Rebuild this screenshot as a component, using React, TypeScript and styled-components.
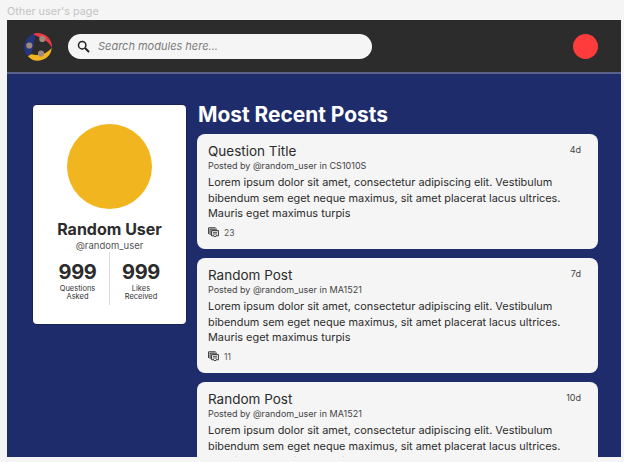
import React from 'react';
import styled, { createGlobalStyle } from 'styled-components';

const GlobalStyle = createGlobalStyle`
    html, body {
        margin: 0;
        padding: 0;
        background: #f5f5f5;
        overflow: hidden;
    }
    * {
        box-sizing: border-box;
    }
    body {
        font-family: Inter, "Noto Sans", sans-serif;
    }
`;

const Page = styled.div`
    width: 624px;
    height: 462px;
    overflow: hidden;
    padding: 5px 3px 0 7px;
`;

const FrameLabel = styled.div`
    height: 15px;
    font-size: 10.8px;
    line-height: 14px;
    color: #c4c4c4;
`;

const Frame = styled.div`
    width: 614px;
    height: 437px;
    background: #1e2c6b;
    overflow: hidden;
`;

const Header = styled.header`
    height: 54px;
    background: #2c2c2c;
    border-bottom: 2px solid #5a628a;
    display: flex;
    align-items: center;
    padding: 0 23px 0 16px;
`;

const Logo = styled.svg`
    width: 30px;
    height: 30px;
    flex: none;
`;

const SearchBar = styled.div`
    width: 304px;
    height: 25px;
    margin-left: 15px;
    border-radius: 13px;
    background: #f5f5f5;
    display: flex;
    align-items: center;
    padding-left: 9px;
    gap: 8px;
`;

const SearchText = styled.span`
    font-size: 11px;
    font-style: italic;
    color: #7b7b7b;
`;

const Avatar = styled.div`
    width: 25px;
    height: 25px;
    margin-left: auto;
    border-radius: 50%;
    background: #ff3b3b;
`;

const Body = styled.main`
    display: flex;
    align-items: flex-start;
    padding: 31px 23px 0 26px;
    gap: 11px;
`;

const ProfileCard = styled.aside`
    width: 153px;
    height: 219px;
    flex: none;
    background: #fff;
    border-radius: 4px;
    box-shadow: 0 0 0 0.5px #10183f;
    display: flex;
    flex-direction: column;
    align-items: center;
    padding-top: 19px;
`;

const ProfilePhoto = styled.div`
    width: 85px;
    height: 85px;
    border-radius: 50%;
    background: #f1b61f;
`;

const ProfileName = styled.div`
    margin-top: 9px;
    font-size: 16px;
    line-height: 22px;
    font-weight: 700;
    color: #2c2c2c;
`;

const ProfileHandle = styled.div`
    font-size: 9.5px;
    line-height: 12px;
    color: #555;
`;

const Stats = styled.div`
    display: flex;
    justify-content: center;
    width: 100%;
    padding-right: 1px;
`;

const Stat = styled.div`
    width: 63px;
    height: 53px;
    display: flex;
    flex-direction: column;
    align-items: center;
    padding-top: 8px;
    & + & {
        border-left: 1px solid #dcdcdc;
    }
`;

const StatValue = styled.div`
    font-size: 20px;
    line-height: 24px;
    font-weight: 700;
    letter-spacing: -0.4px;
    color: #2c2c2c;
`;

const StatLabel = styled.div`
    font-size: 7.5px;
    line-height: 8px;
    margin-top: 1px;
    text-align: center;
    color: #333;
`;

const Feed = styled.section`
    flex: 1;
    min-width: 0;
`;

const FeedTitle = styled.h1`
    margin: -3px 0 6px 1px;
    font-size: 20.9px;
    line-height: 26px;
    font-weight: 700;
    color: #fff;
`;

const PostList = styled.div`
    display: flex;
    flex-direction: column;
    gap: 9px;
`;

const PostCard = styled.article`
    height: 115px;
    background: #f5f5f5;
    border-radius: 8px;
    padding: 8px 17px 0 11px;
    color: #2c2c2c;
`;

const PostHead = styled.div`
    display: flex;
    justify-content: space-between;
    align-items: flex-start;
`;

const PostTitle = styled.h2`
    margin: 0;
    font-size: 13.5px;
    line-height: 18px;
    font-weight: 400;
`;

const PostAge = styled.span`
    font-size: 9px;
    line-height: 16px;
    color: #444;
`;

const PostMeta = styled.div`
    font-size: 9px;
    line-height: 11px;
    color: #444;
`;

const PostBody = styled.p`
    margin: 4px 0 0;
    width: 375px;
    font-size: 10.9px;
    line-height: 15.5px;
    color: #2c2c2c;
`;

const PostFooter = styled.div`
    display: flex;
    align-items: center;
    gap: 5px;
    margin-top: 5px;
    font-size: 8.5px;
    line-height: 12px;
    color: #555;
`;

const SearchIcon = () => (
    <svg width="13" height="13" viewBox="0 0 13 13" fill="none" stroke="#222" strokeWidth="1.5">
        <circle cx="5.2" cy="5.2" r="3.7" />
        <path d="M8 8l4 4" strokeWidth="1.9" />
    </svg>
);

const CommentIcon = () => (
    <svg width="11" height="11" viewBox="0 0 11 11" fill="none" stroke="#333" strokeWidth="1">
        <path d="M.6 7V.8h7" />
        <path d="M2.1 8V2.2h7" />
        <path d="M3.6 3.6h6.8v5.2H8L7 10 6 8.8H3.6z" />
        <path d="M5 5.4h4M5 7h4" strokeWidth=".8" />
    </svg>
);

const posts = [
    { title: 'Question Title', meta: 'Posted by @random_user in CS1010S', age: '4d', comments: 23 },
    { title: 'Random Post', meta: 'Posted by @random_user in MA1521', age: '7d', comments: 11 },
    { title: 'Random Post', meta: 'Posted by @random_user in MA1521', age: '10d', comments: 8 }
];

const lorem =
    'Lorem ipsum dolor sit amet, consectetur adipiscing elit. Vestibulum bibendum sem eget neque maximus, sit amet placerat lacus ultrices. Mauris eget maximus turpis';

export default function App() {
    return (
        <Page>
            <GlobalStyle />
            <FrameLabel>Other user's page</FrameLabel>
            <Frame>
                <Header>
                    <Logo viewBox="0 0 30 30">
                        <path d="M13 2.2A14 14 0 0 0 6 26.5C6 24 8 22 9 20 11 15 11 9 13 2.2z" fill="#25357f" />
                        <path d="M10 3A14 14 0 0 1 29 17C27.500 14 25.500 11.500 23 10 19 7 14 5.500 10 3z" fill="#ee3a43" />
                        <path d="M28.8 17A14 14 0 0 1 5 25.600C7 23.500 8 23 10 23.500 16 25 22 24 28.800 17z" fill="#f1b61f" />
                        <circle cx="6.300" cy="14.500" r="3.100" fill="#9c8a7e" />
                        <circle cx="19.300" cy="8" r="3.100" fill="#9c8a7e" />
                        <circle cx="18" cy="22.500" r="3.100" fill="#9c8a7e" />
                    </Logo>
                    <SearchBar>
                        <SearchIcon />
                        <SearchText>Search modules here...</SearchText>
                    </SearchBar>
                    <Avatar />
                </Header>
                <Body>
                    <ProfileCard>
                        <ProfilePhoto />
                        <ProfileName>Random User</ProfileName>
                        <ProfileHandle>@random_user</ProfileHandle>
                        <Stats>
                            <Stat>
                                <StatValue>999</StatValue>
                                <StatLabel>
                                    Questions
                                    <br />
                                    Asked
                                </StatLabel>
                            </Stat>
                            <Stat>
                                <StatValue>999</StatValue>
                                <StatLabel>
                                    Likes
                                    <br />
                                    Received
                                </StatLabel>
                            </Stat>
                        </Stats>
                    </ProfileCard>
                    <Feed>
                        <FeedTitle>Most Recent Posts</FeedTitle>
                        <PostList>
                            {posts.map((post, index) => (
                                <PostCard key={index}>
                                    <PostHead>
                                        <PostTitle>{post.title}</PostTitle>
                                        <PostAge>{post.age}</PostAge>
                                    </PostHead>
                                    <PostMeta>{post.meta}</PostMeta>
                                    <PostBody>{lorem}</PostBody>
                                    <PostFooter>
                                        <CommentIcon />
                                        {post.comments}
                                    </PostFooter>
                                </PostCard>
                            ))}
                        </PostList>
                    </Feed>
                </Body>
            </Frame>
        </Page>
    );
}
